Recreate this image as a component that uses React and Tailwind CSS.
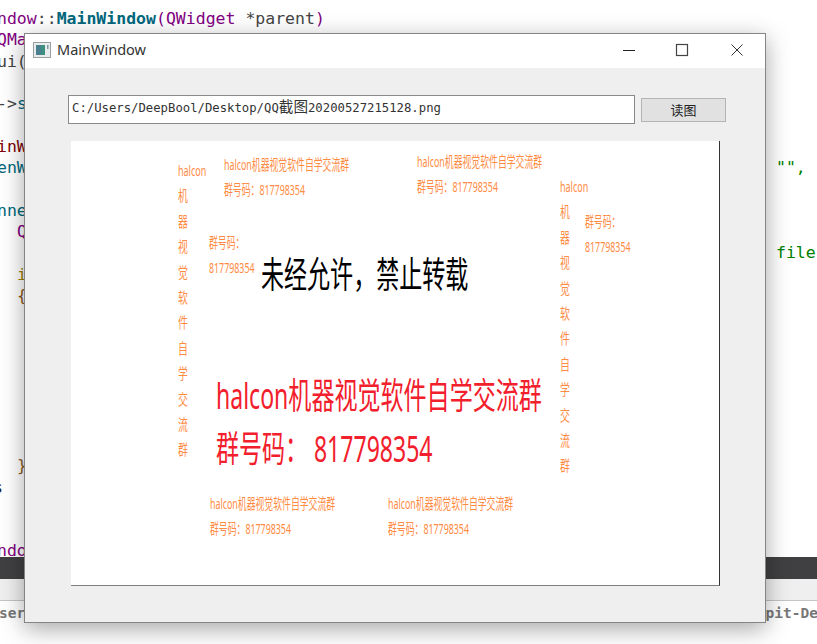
import React from "react";

const cjk = "font-['Noto_Sans','Noto_Sans_CJK_SC',sans-serif]";
const orange = "text-[#ff8a42]";

function Caption({ className, first, second }) {
  return (
    <div className={`absolute flex origin-top-left scale-x-[0.59] flex-col text-[15px] leading-[24.7px] whitespace-nowrap ${orange} ${cjk} ${className}`}>
      <span>{first}</span>
      <span>{second}</span>
    </div>
  );
}

function VerticalText({ className, first }) {
  return (
    <div className={`absolute flex flex-col text-[14.5px] leading-[25.4px] ${orange} ${cjk} ${className}`}>
      <span className="origin-top-left scale-x-[0.62] whitespace-nowrap">{first}</span>
      {"机器视觉软件自学交流群".split("").map((c, i) => (
        <span key={i} className="origin-top-left scale-x-[0.68]">{c}</span>
      ))}
    </div>
  );
}

function Code() {
  return (
    <div className="h-[557px] overflow-hidden bg-white pt-[8px] font-['DejaVu_Sans_Mono',monospace] text-[16.5px] leading-[21.3px] whitespace-pre text-[#444]">
      <div className="ml-[-3px]">
        <span className="text-[#800080]">ndow</span>::<span className="font-bold text-[#00677c]">MainWindow</span>
        <span className="text-[#800080]">(QWidget</span> *parent<span className="text-[#800080]">)</span>
      </div>
      <div className="ml-[-3px] text-[#800080]">QMa</div>
      <div className="ml-[-3px]">ui(</div>
      <div>&nbsp;</div>
      <div className="ml-[-3px]">-&gt;<span className="text-[#00677c]">s</span></div>
      <div>&nbsp;</div>
      <div className="ml-[-3px] text-[#800000]">inW</div>
      <div className="flex justify-between text-[#00677c]">
        <span className="ml-[-3px]">enW</span>
        <span className="mr-[-8px] w-[49px] text-[#008000]">"",<span className="text-[#444]"> "</span></span>
      </div>
      <div>&nbsp;</div>
      <div className="ml-[-3px] text-[#00677c]">nne</div>
      <div className="ml-[17px] text-[#800080]">Q</div>
      <div className="flex justify-end">
        <span className="mr-[-8px] w-[49px] text-[#008000]">file</span>
      </div>
      <div className="ml-[17px] text-[#a08000]">i</div>
      <div className="ml-[17px] text-[#8a5a20]">{"{"}</div>
      {Array.from({ length: 7 }).map((_, i) => (
        <div key={i}>&nbsp;</div>
      ))}
      <div className="ml-[17px] text-[#8a5a20]">{"}"}</div>
      <div className="ml-[-7px] text-[#222]">s</div>
      <div>&nbsp;</div>
      <div>&nbsp;</div>
      <div className="ml-[-3px] text-[#800080]">ndo</div>
    </div>
  );
}

function WindowIcon() {
  return (
    <svg width="18" height="16" viewBox="0 0 18 16">
      <rect x="0.5" y="0.5" width="17" height="15" fill="#e8ecec" stroke="#9aa0a0" />
      <rect x="3" y="3" width="9" height="10" fill="#3f8f80" />
      <rect x="3" y="3" width="5" height="10" fill="#4a7f90" />
      <rect x="14" y="3" width="1.5" height="4" fill="#7f9a9a" />
    </svg>
  );
}

export default function App() {
  return (
    <div className="relative h-[644px] w-[817px] overflow-hidden bg-white">
      <Code />
      <div className="h-[22px] bg-[#404042]" />
      <div className="h-[22px] border-b border-[#c4c4c4] bg-[#efefef]" />
      <div className="flex justify-between pt-[2px] font-['DejaVu_Sans_Mono',monospace] text-[14.5px] leading-[20px] font-bold text-[#777]">
        <span className="ml-[-1px]">ser</span>
        <span className="mr-[-1px]">pit-De</span>
      </div>

      <div className="absolute top-[33px] left-[24px] flex h-[590px] w-[742px] flex-col border border-[#858585] bg-[#efefef] shadow-[0_6px_22px_rgba(0,0,0,0.35)]">
        <div className="flex h-[34px] shrink-0 items-center bg-white pb-[2px] pl-[8px]">
          <WindowIcon />
          <span className="ml-[6px] font-['Noto_Sans',sans-serif] text-[14.5px] text-[#333]">MainWindow</span>
          <div className="ml-auto flex h-full items-center">
            <svg width="14" height="14" viewBox="0 0 14 14" className="mr-[39px]">
              <path d="M1 7.5H13" stroke="#222" strokeWidth="1" />
            </svg>
            <svg width="14" height="14" viewBox="0 0 14 14" className="mr-[41px]">
              <rect x="1.5" y="1.5" width="11" height="11" fill="none" stroke="#444" strokeWidth="1.2" />
            </svg>
            <svg width="14" height="14" viewBox="0 0 14 14" className="mr-[21px]">
              <path d="M1.5 1.5L12.5 12.5M12.5 1.5L1.5 12.5" stroke="#333" strokeWidth="1" />
            </svg>
          </div>
        </div>

        <div className="pt-[27px] pl-[43px]">
          <div className="flex items-center gap-[6px]">
            <div className="h-[29px] w-[567px] border border-[#8a8a8a] bg-white pl-[3px] font-['DejaVu_Sans_Mono','Noto_Sans_CJK_SC',monospace] text-[12.28px] leading-[25px] whitespace-nowrap text-[#333]">
              C:/Users/DeepBool/Desktop/QQ<span className="text-[14.6px] leading-[20px]">截图</span>20200527215128.png
            </div>
            <button className="flex h-[24px] w-[85px] items-center justify-center border border-[#b4b4b4] bg-[#e1e1e1] font-['Noto_Sans_CJK_SC',sans-serif] text-[13px] text-[#222]">
              读图
            </button>
          </div>

          <div className="relative mt-[17px] ml-[3px] h-[445px] w-[649px] overflow-hidden border-r border-b border-r-[#333] border-b-[#808080] bg-white">
            <VerticalText className="top-[17px] left-[107px]" first="halcon" />
            <VerticalText className="top-[33px] left-[489px]" first="halcon" />

            <Caption className="top-[11px] left-[153px]" first="halcon机器视觉软件自学交流群" second="群号码：817798354" />
            <Caption className="top-[8px] left-[346px]" first="halcon机器视觉软件自学交流群" second="群号码：817798354" />
            <Caption className="top-[350px] left-[139px]" first="halcon机器视觉软件自学交流群" second="群号码：817798354" />
            <Caption className="top-[350px] left-[317px]" first="halcon机器视觉软件自学交流群" second="群号码：817798354" />
            <Caption className="top-[89px] left-[138px]" first="群号码：" second="817798354" />
            <Caption className="top-[68px] left-[514px]" first="群号码：" second="817798354" />

            <div className={`absolute top-[109px] left-[190px] origin-top-left scale-x-[0.64] text-[36px] leading-[50px] whitespace-nowrap text-black ${cjk}`}>
              未经允许，禁止转载
            </div>
            <div className={`absolute top-[228px] left-[145px] origin-top-left scale-x-[0.64] text-[36px] leading-[53px] whitespace-nowrap text-[#f2202c] ${cjk}`}>
              halcon机器视觉软件自学交流群
              <br />
              群号码：<span className="ml-[9px]">817798354</span>
            </div>
          </div>
        </div>
      </div>
    </div>
  );
}
